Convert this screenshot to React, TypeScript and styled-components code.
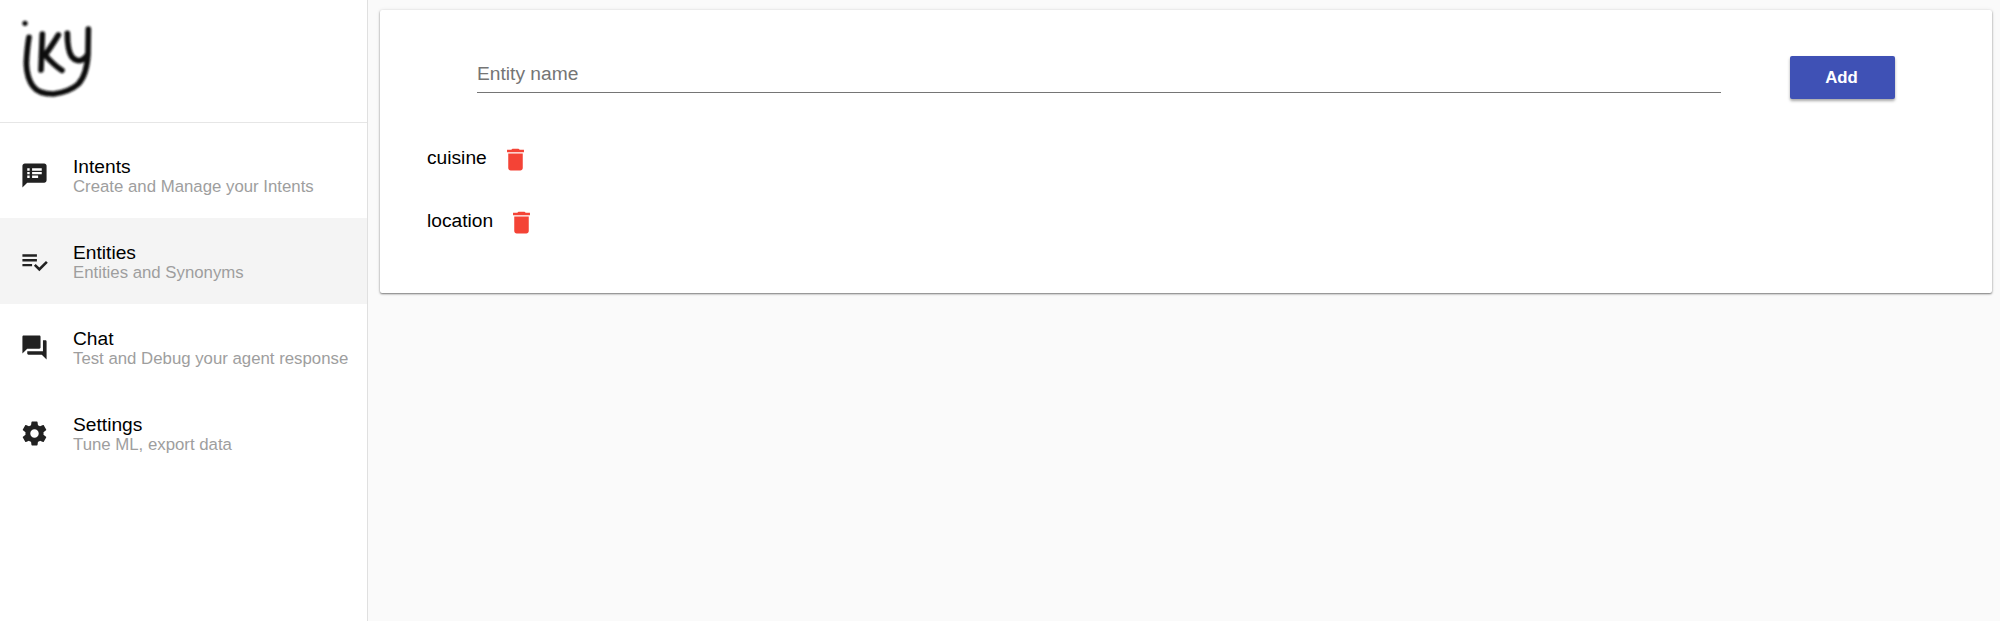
import React from 'react';
import styled, { createGlobalStyle } from 'styled-components';

const GlobalStyle = createGlobalStyle`
  html, body {
    margin: 0;
    height: 100%;
    background: #fafafa;
    font-family: 'Liberation Sans', Arial, sans-serif;
  }
  #root {
    height: 100%;
  }
`;

const Page = styled.div`
  display: flex;
  height: 621px;
  overflow: hidden;
`;

const Sidebar = styled.aside`
  width: 367px;
  flex-shrink: 0;
  background: #fff;
  border-right: 1px solid #e0e0e0;
`;

const LogoBox = styled.div`
  height: 123px;
  box-sizing: border-box;
  padding: 10px;
  border-bottom: 1px solid #e6e6e6;
`;

const NavList = styled.nav`
  padding-top: 9px;
`;

const NavItem = styled.div<{ $active?: boolean }>`
  height: 86px;
  display: flex;
  align-items: center;
  padding-left: 20px;
  background: ${(p) => (p.$active ? '#f4f4f4' : 'transparent')};
`;

const NavIcon = styled.svg`
  width: 29px;
  height: 29px;
  fill: #212121;
  flex-shrink: 0;
`;

const NavText = styled.div`
  margin-left: 24px;
  padding-top: 3px;
`;

const NavTitle = styled.div`
  font-size: 19.2px;
  line-height: 20px;
  color: #000;
`;

const NavSub = styled.div`
  font-size: 16.8px;
  line-height: 20px;
  color: #9e9e9e;
`;

const Main = styled.main`
  flex: 1;
  padding: 10px 8px 0 12px;
`;

const Card = styled.section`
  height: 283px;
  box-sizing: border-box;
  background: #fff;
  border-radius: 2px;
  box-shadow: 0 1px 2px rgba(0, 0, 0, 0.5), 0 0 4px rgba(0, 0, 0, 0.08);
  padding: 46px 0 0 47px;
`;

const FormRow = styled.div`
  display: flex;
  align-items: flex-start;
  padding-left: 50px;
  height: 71px;
`;

const NameField = styled.input`
  width: 1244px;
  height: 37px;
  box-sizing: border-box;
  border: 0;
  border-bottom: 1px solid #757575;
  outline: none;
  padding: 0;
  font: 19.2px 'Liberation Sans', Arial, sans-serif;
  background: transparent;
  &::placeholder {
    color: #757575;
    opacity: 1;
  }
`;

const AddButton = styled.button`
  width: 105px;
  height: 43px;
  margin-left: 69px;
  padding: 0 2px 0 0;
  border: 0;
  border-radius: 2px;
  background: #3f51b5;
  color: #fff;
  font: bold 16.8px 'Liberation Sans', Arial, sans-serif;
  box-shadow: 0 2px 3px rgba(0, 0, 0, 0.35);
`;

const EntityRow = styled.div`
  height: 63px;
  display: flex;
  align-items: center;
  gap: 18px;
`;

const EntityName = styled.span`
  font-size: 19.2px;
  color: #000;
  margin-top: -1px;
`;

const TrashIcon = styled.svg`
  width: 29px;
  height: 29px;
  fill: #f44336;
  margin: 1px 0 0 -4px;
`;

const Logo = () => (
  <svg width="100" height="100" viewBox="0 0 300 300" fill="none" stroke="#111" strokeWidth="17" strokeLinecap="round" strokeLinejoin="round">
    <defs>
      <filter id="soft">
        <feGaussianBlur stdDeviation="2.5" />
      </filter>
    </defs>
    <g filter="url(#soft)">
      <circle cx="45" cy="40" r="8" fill="#111" stroke="none" />
      <path d="M57 82C52 110 50 140 49 160C50 190 58 215 70 230C82 247 105 252 130 252C160 248 185 240 205 222C225 200 232 170 234 130L235 57" />
      <path d="M97 72L93 180" />
      <path d="M145 75C130 100 118 118 105 135C120 152 138 170 156 181" />
      <path d="M172 70C172 100 175 125 185 140C198 155 215 158 232 135" />
    </g>
  </svg>
);

const navItems = [
  {
    title: 'Intents',
    sub: 'Create and Manage your Intents',
    icon: 'M20 2H4c-1.1 0-1.99.9-1.99 2L2 22l4-4h14c1.1 0 2-.9 2-2V4c0-1.1-.9-2-2-2zM8 14H6v-2h2v2zm0-3H6V9h2v2zm0-3H6V6h2v2zm7 6h-5v-2h5v2zm3-3h-8V9h8v2zm0-3h-8V6h8v2z',
  },
  {
    title: 'Entities',
    sub: 'Entities and Synonyms',
    icon: 'M14 10H2v2h12v-2zm0-4H2v2h12V6zM2 16h8v-2H2v2zm19.5-4.5L23 13l-6.99 7-4.51-4.5L13 14l3.01 3 5.49-5.5z',
    active: true,
  },
  {
    title: 'Chat',
    sub: 'Test and Debug your agent response',
    icon: 'M21 6h-2v9H6v2c0 .55.45 1 1 1h11l4 4V7c0-.55-.45-1-1-1zm-4 6V3c0-.55-.45-1-1-1H3c-.55 0-1 .45-1 1v14l4-4h10c.55 0 1-.45 1-1z',
  },
  {
    title: 'Settings',
    sub: 'Tune ML, export data',
    icon: 'M19.43 12.98c.04-.32.07-.64.07-.98s-.03-.66-.07-.98l2.11-1.65c.19-.15.24-.42.12-.64l-2-3.46c-.12-.22-.39-.3-.61-.22l-2.49 1c-.52-.4-1.08-.73-1.69-.98l-.38-2.65C14.46 2.18 14.25 2 14 2h-4c-.25 0-.46.18-.49.42l-.38 2.65c-.61.25-1.17.59-1.69.98l-2.49-1c-.23-.09-.49 0-.61.22l-2 3.46c-.13.22-.07.49.12.64l2.11 1.65c-.04.32-.07.65-.07.98s.03.66.07.98l-2.11 1.65c-.19.15-.24.42-.12.64l2 3.46c.12.22.39.3.61.22l2.49-1c.52.4 1.08.73 1.69.98l.38 2.65c.03.24.24.42.49.42h4c.25 0 .46-.18.49-.42l.38-2.65c.61-.25 1.17-.59 1.69-.98l2.49 1c.23.09.49 0 .61-.22l2-3.46c.12-.22.07-.49-.12-.64l-2.11-1.65zM12 15.5c-1.93 0-3.5-1.57-3.5-3.5s1.57-3.5 3.5-3.5 3.5 1.57 3.5 3.5-1.57 3.5-3.5 3.5z',
  },
];

const entities = ['cuisine', 'location'];

const App: React.FC = () => {
  return (
    <Page>
      <GlobalStyle />
      <Sidebar>
        <LogoBox>
          <Logo />
        </LogoBox>
        <NavList>
          {navItems.map((item) => (
            <NavItem key={item.title} $active={item.active}>
              <NavIcon viewBox="0 0 24 24">
                <path d={item.icon} />
              </NavIcon>
              <NavText>
                <NavTitle>{item.title}</NavTitle>
                <NavSub>{item.sub}</NavSub>
              </NavText>
            </NavItem>
          ))}
        </NavList>
      </Sidebar>
      <Main>
        <Card>
          <FormRow>
            <NameField placeholder="Entity name" />
            <AddButton>Add</AddButton>
          </FormRow>
          {entities.map((name) => (
            <EntityRow key={name}>
              <EntityName>{name}</EntityName>
              <TrashIcon viewBox="0 0 24 24">
                <path d="M6 19c0 1.1.9 2 2 2h8c1.1 0 2-.9 2-2V7H6v12zM19 4h-3.5l-1-1h-5l-1 1H5v2h14V4z" />
              </TrashIcon>
            </EntityRow>
          ))}
        </Card>
      </Main>
    </Page>
  );
};

export default App;
